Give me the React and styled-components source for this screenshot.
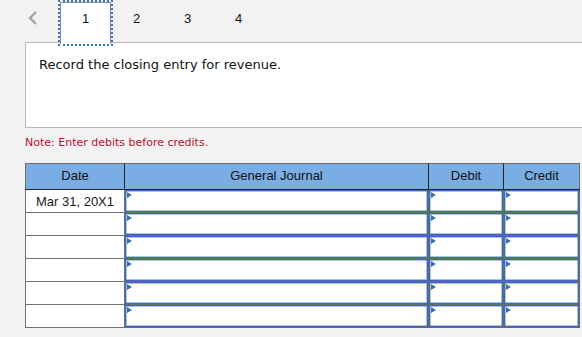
import React from 'react';
import styled, { createGlobalStyle } from 'styled-components';

const GlobalStyle = createGlobalStyle`
  body {
    margin: 0;
    background: #f2f2f2;
    overflow: hidden;
    font-family: "Liberation Sans", Arial, sans-serif;
  }
`;

const Page = styled.div`
  width: 582px;
  height: 337px;
  overflow: hidden;
`;

const TabBar = styled.div`
  display: flex;
  align-items: flex-start;
  height: 42px;
  padding-left: 20px;
`;

const Back = styled.div`
  width: 26px;
  height: 30px;
  margin-right: 14px;
  display: flex;
  align-items: center;
  justify-content: center;
  padding-top: 3px;
`;

const Tab = styled.div`
  position: relative;
  z-index: 1;
  box-sizing: border-box;
  width: 51px;
  height: 42px;
  margin-top: 2px;
  padding-top: 8px;
  text-align: center;
  font-size: 13px;
  color: #111;
  border: 1px solid ${p => (p.$active ? '#8c8c8c' : 'transparent')};
  border-bottom: none;
  background: ${p => (p.$active ? '#fff' : 'transparent')};
  outline: ${p => (p.$active ? '2px dotted #3b73c1' : 'none')};
`;

const Panel = styled.div`
  margin-left: 25px;
  width: 580px;
  height: 84px;
  box-sizing: content-box;
  border: 1px solid #b8b8b8;
  background: #fff;
`;

const Prompt = styled.p`
  margin: 0;
  padding: 14px 0 0 13px;
  font-family: "DejaVu Sans", Verdana, sans-serif;
  font-size: 13px;
  line-height: 16px;
  color: #111;
`;

const Note = styled.p`
  margin: 8px 0 0 25px;
  font-family: "DejaVu Sans", Verdana, sans-serif;
  font-size: 11px;
  line-height: 14px;
  color: #b4122f;
`;

const Journal = styled.table`
  margin: 13px 0 0 25px;
  width: 554px;
  border-collapse: collapse;
  table-layout: fixed;
  font-size: 13px;
  color: #1a1a1a;
`;

const Head = styled.th`
  height: 23px;
  padding: 0 0 2px;
  font-weight: normal;
  color: #111;
  background: #79ade3;
  border: 1px solid #262626;
  border-top-color: #6e6e6e;
  &:first-child { border-left-color: #6e6e6e; }
  &:last-child { border-right-color: #6e6e6e; }
`;

const DateCell = styled.td`
  height: 22px;
  padding: 0;
  text-align: center;
  background: #fff;
  border: 1px solid #707070;
`;

const EntryCell = styled.td`
  height: 22px;
  padding: 0;
  border: 1px solid #6a6a6a;
`;

const Field = styled.div`
  position: relative;
  box-sizing: border-box;
  height: 22px;
  background: #fff;
  border: 1px solid #3a6db3;
  box-shadow: inset 0 0 0 0.5px #5b88c6;
`;

const Marker = styled.span`
  position: absolute;
  left: 1px;
  top: 1px;
  width: 0;
  height: 0;
  border-top: 3px solid transparent;
  border-bottom: 3px solid transparent;
  border-left: 5px solid #3a6db3;
`;

const rows = ['Mar 31, 20X1', '', '', '', '', ''];

const Entry = () => (
  <EntryCell>
    <Field>
      <Marker />
    </Field>
  </EntryCell>
);

export default function App() {
  return (
    <Page>
      <GlobalStyle />
      <TabBar>
        <Back>
          <svg width="12" height="16" viewBox="0 0 12 16">
            <path d="M9 2 L3 8 L9 14" fill="none" stroke="#a3a3a3" strokeWidth="2.4" />
          </svg>
        </Back>
        <Tab $active>1</Tab>
        <Tab>2</Tab>
        <Tab>3</Tab>
        <Tab>4</Tab>
      </TabBar>
      <Panel>
        <Prompt>Record the closing entry for revenue.</Prompt>
      </Panel>
      <Note>Note: Enter debits before credits.</Note>
      <Journal>
        <colgroup>
          <col style={{ width: 99 }} />
          <col style={{ width: 304 }} />
          <col style={{ width: 75 }} />
          <col style={{ width: 76 }} />
        </colgroup>
        <thead>
          <tr>
            <Head>Date</Head>
            <Head>General Journal</Head>
            <Head>Debit</Head>
            <Head>Credit</Head>
          </tr>
        </thead>
        <tbody>
          {rows.map((d, i) => (
            <tr key={i}>
              <DateCell>{d}</DateCell>
              <Entry />
              <Entry />
              <Entry />
            </tr>
          ))}
        </tbody>
      </Journal>
    </Page>
  );
}
